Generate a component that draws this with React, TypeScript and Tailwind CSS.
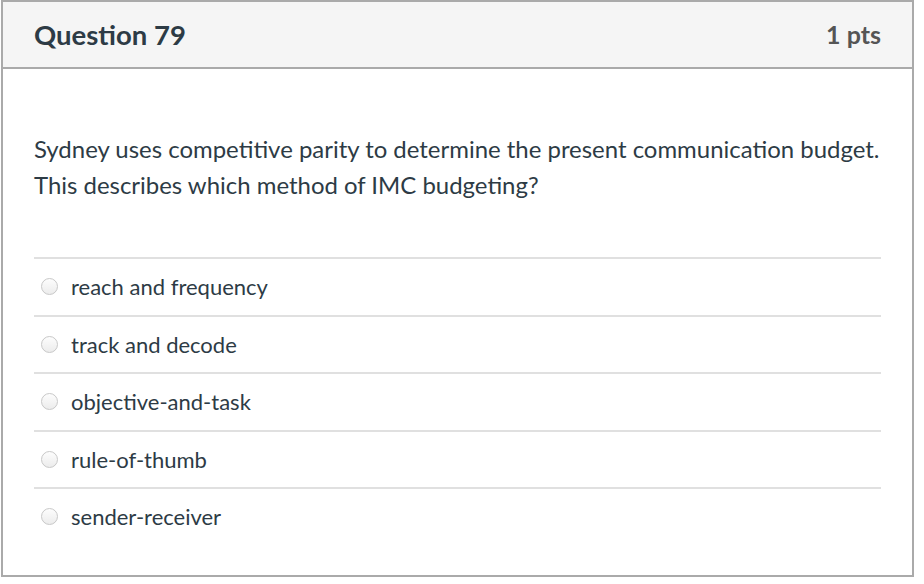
import React from "react";

const answers = [
  "reach and frequency",
  "track and decode",
  "objective-and-task",
  "rule-of-thumb",
  "sender-receiver",
];

function Radio() {
  return (
    <span className="inline-block w-[17px] h-[17px] rounded-full border border-[#c8c8c8] bg-gradient-to-b from-[#fdfdfd] to-[#ececec] shrink-0" />
  );
}

export default function App() {
  return (
    <div className="w-[924px] h-[584px] bg-white" style={{ fontFamily: "Lato, 'Noto Sans', sans-serif" }}>
      <div className="ml-px w-[913px] h-[577px] border-2 border-[#aaaaaa] flex flex-col">
        <div className="h-[67px] bg-[#f5f5f5] border-b-2 border-[#aaaaaa] flex items-center justify-between pl-[31px] pr-[31px] shrink-0">
          <span className="text-[27.5px] font-bold text-[#2d3b45]">Question 79</span>
          <span className="text-[25px] font-bold text-[#555555]">1 pts</span>
        </div>
        <div className="px-[31px] pt-[62px]">
          <p className="text-[23.95px] leading-[36px] text-[#2d3b45] whitespace-nowrap">
            Sydney uses competitive parity to determine the present communication budget.
            <br />
            This describes which method of IMC budgeting?
          </p>
          <div className="mt-[54px]">
            {answers.map((a) => (
              <div key={a} className="border-t-2 border-[#e0e0e0] h-[57.5px] flex items-center pl-[7px] gap-[13px]">
                <Radio />
                <span className="text-[22px] text-[#2d3b45]">{a}</span>
              </div>
            ))}
          </div>
        </div>
      </div>
    </div>
  );
}
